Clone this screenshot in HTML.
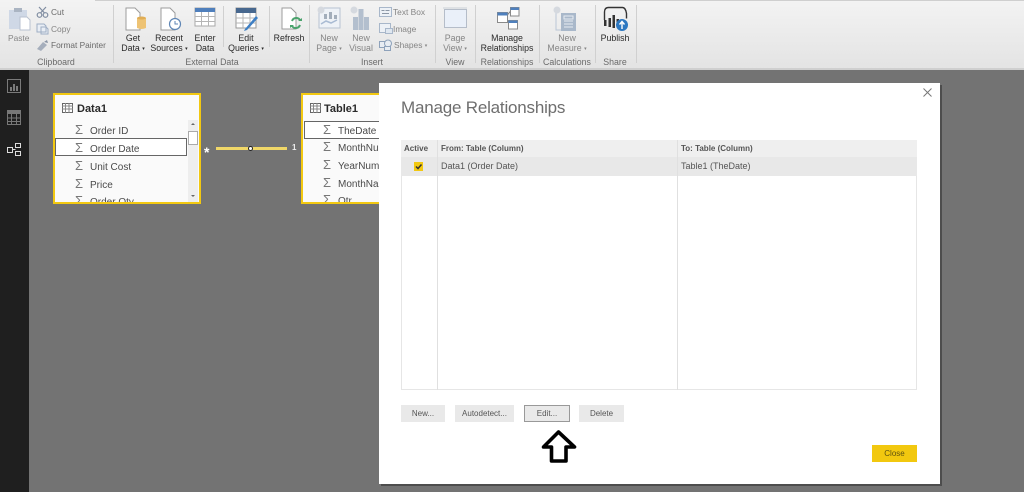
<!DOCTYPE html>
<html><head><meta charset="utf-8"><style>
*{box-sizing:border-box}
html,body{margin:0;padding:0}
body{width:1024px;height:492px;overflow:hidden;position:relative;background:#737373;font-family:"Liberation Sans",sans-serif;color:#2a2a2a}
#w{position:absolute;left:0;top:0;width:1024px;height:492px;filter:blur(.35px)}
.t{position:absolute;white-space:nowrap;font-size:8.8px;line-height:10px}
.c{transform:translateX(-50%);text-align:center}
.g{color:#858585}
.l{color:#6a6a6a}
.a{position:absolute}
svg{position:absolute;left:0;top:0}
.f{font-size:10px;color:#4a4a4a;line-height:12px}
.s{position:absolute;left:1px;top:-2px;font-size:13px;color:#777}
.b{position:absolute;background:#e9e9e9;text-align:center;font-size:8px;line-height:17px;color:#555;height:17px}
.d{font-size:5px;vertical-align:1px}
.h{font-size:8px;font-weight:bold;color:#555}
</style></head><body><div id="w">
<div class="a" style="left:0;top:0;width:1024px;height:69px;background:linear-gradient(#f3f3f3,#e3e3e3)"></div>
<div class="a" style="left:0;top:68px;width:1024px;height:2px;background:#cfcfcf"></div>
<div class="a" style="left:95px;top:0;width:929px;height:1px;background:#cfcfcf"></div>
<div class="a" style="left:0;top:70px;width:29px;height:422px;background:#1f1f1f"></div>

<svg width="1024" height="492" viewBox="0 0 1024 492">
<g stroke="#d0d0d0"><path d="M113.5 5V63M223.5 6V47M269.5 6V47M309.5 5V63M435.5 5V63M475.5 5V63M539.5 5V63M595.5 5V63M636.5 5V63"/></g>
<!-- paste -->
<path d="M9 10h18v19H9z" fill="#cfd8e6"/><path d="M14 8h8v4h-8z" fill="#aab4c2"/>
<path d="M20 17h7l3 3v10h-10z" fill="#fff" stroke="#b9c2d0"/>
<!-- cut -->
<g fill="none" stroke="#7f8ca0" stroke-width="1.200"><circle cx="39.500" cy="15" r="2.300"/><circle cx="45.500" cy="15" r="2.300"/><path d="M40.500 13L46 7M44.500 13L39 7"/></g>
<!-- copy -->
<path d="M37 24h7l2 2v6h-9z M41 27h5l2 2v5h-7z" fill="#e9eef5" stroke="#9eaec4"/>
<!-- format painter -->
<path d="M37 49l6-7 4 3-6 6z" fill="#a5aebc"/><path d="M44 42l3-2 1 3z" fill="#8792a3"/>
<!-- get data -->
<path d="M126 8h9l5 5v17h-14z" fill="#fff" stroke="#9c9c9c"/>
<path d="M137 18h9v10q-4.500 2-9 0z" fill="#eec374"/><ellipse cx="141.500" cy="18" rx="4.500" ry="1.500" fill="#e0ad55"/>
<!-- recent -->
<path d="M161 8h9l5 5v17h-14z" fill="#fff" stroke="#9c9c9c"/>
<circle cx="175" cy="24" r="5.500" fill="#fff" stroke="#5f86b5" stroke-width="1.200"/><path d="M175 21v3h3" fill="none" stroke="#5f86b5"/>
<!-- enter data -->
<rect x="195" y="8" width="20" height="18" fill="#fff" stroke="#a9a9a9"/><rect x="195" y="8" width="20" height="4" fill="#4f7fbc"/>
<path d="M195 16.500h20M195 21.500h20M201.500 12v14M208.500 12v14" stroke="#b5b5b5" fill="none"/>
<!-- edit queries -->
<rect x="236" y="8" width="20" height="20" fill="#fff" stroke="#999"/><rect x="236" y="8" width="20" height="5" fill="#48688f"/>
<path d="M236 18h20M236 23h20M243 13v15M250 13v15" stroke="#b5b5b5" fill="none"/>
<path d="M245 29l11-13 2 2-11 12-3 1z" fill="#3e7fc4"/>
<!-- refresh -->
<path d="M282 8h9l5 5v16h-14z" fill="#fff" stroke="#9c9c9c"/>
<path d="M292 21a4.500 4.500 0 0 1 8-1M300 25a4.500 4.500 0 0 1-8 1" fill="none" stroke="#4ba36d" stroke-width="2"/><path d="M298 21h4v-3zM294 25h-4v3z" fill="#4ba36d"/>
<!-- new page -->
<rect x="319" y="8" width="21" height="20" fill="#eef2f7" stroke="#b8c3d2"/>
<path d="M324 14h3v5h-3zM329 12h3v7h-3zM334 15h3v4h-3z" fill="#a3aebb"/><path d="M321 24l5-3 5 2 6-3" fill="none" stroke="#a9bbd3" stroke-width="1.500"/>
<circle cx="321" cy="10" r="3.500" fill="#d5d9df"/>
<!-- new visual -->
<path d="M353 17h5v13h-5zM358.500 9h5v21h-5zM364 17h5v13h-5z" fill="#b3bfce"/><circle cx="354" cy="10" r="3.500" fill="#d5d9df"/>
<!-- text box -->
<rect x="379.500" y="7.500" width="12" height="9" fill="#edf1f6" stroke="#a8b7ca"/><path d="M381.500 10.500h3M385.500 10.500h4M382 13.500h7" stroke="#8c97a6"/>
<rect x="379.500" y="23.500" width="11" height="9" fill="#edf1f6" stroke="#a8b7ca"/><rect x="385.500" y="28.500" width="7" height="5" fill="#dfe7f0" stroke="#a8b7ca"/>
<rect x="379.500" y="41.500" width="7" height="6" fill="#e8edf3" stroke="#8ea2bb"/><circle cx="388" cy="43.500" r="3.500" fill="#e8edf3" stroke="#8ea2bb"/><rect x="384.500" y="46.500" width="6" height="4" fill="#e8edf3" stroke="#8ea2bb"/>
<!-- page view -->
<rect x="444.500" y="9.500" width="22" height="18" fill="#eaf0f9" stroke="#b5bdc9"/><path d="M443 8h24" stroke="#ccd1d8"/>
<!-- manage relationships -->
<path d="M507 15.500L511 10.500M507 20L509 24" fill="none" stroke="#777"/>
<rect x="497.500" y="12.500" width="10" height="10" fill="#fff" stroke="#8a8a8a"/><rect x="497.500" y="12.500" width="10" height="3" fill="#4f80bd"/>
<rect x="510.500" y="7.500" width="8.500" height="8.500" fill="#fff" stroke="#8a8a8a"/><rect x="510.500" y="7.500" width="8.500" height="2.500" fill="#4f80bd"/>
<rect x="508.500" y="20.500" width="9" height="8.500" fill="#fff" stroke="#8a8a8a"/><rect x="508.500" y="20.500" width="9" height="2.500" fill="#4f80bd"/>
<!-- new measure -->
<path d="M556 13v17h8" fill="none" stroke="#bac6d6"/><rect x="561" y="13" width="15" height="18" fill="#a9b8ca"/><path d="M564 16h9v3h-9zM564 21h9M564 24h9M564 27h9" stroke="#e7ecf2" fill="none"/>
<circle cx="557" cy="10" r="3.500" fill="#d5d9df"/>
<!-- publish -->
<path d="M604.500 20v-8q0-4.500 4-4.500h14q3 0 4 6v5" fill="none" stroke="#333" stroke-width="1.400"/>
<path d="M604 20h2.500v6H604zM608.500 18h2.500v9h-2.500zM612.500 15h2.500v13h-2.500zM616.500 19h2.500v7h-2.500z" fill="#333"/>
<circle cx="622" cy="25" r="6" fill="#2d78c1"/><path d="M622 29v-7M619.500 24.500l2.500-3 2.500 3" stroke="#fff" fill="none" stroke-width="1.400"/>
<!-- sidebar icons -->
<rect x="7.500" y="79.500" width="13" height="13" fill="none" stroke="#7a7a7a"/><path d="M10 91v-4h2v4zM13 91v-7h2v7zM16 91v-5h2v5z" fill="#7a7a7a"/>
<rect x="7.500" y="110.500" width="13" height="14" fill="none" stroke="#777"/><path d="M7 111h14v3H7z" fill="#777"/><path d="M7 118h14M7 121.500h14M11.500 114v11M16.500 114v11" stroke="#777"/>
<rect x="7.500" y="147.500" width="5" height="5" fill="none" stroke="#ddd"/><rect x="15.500" y="143.500" width="5" height="4" fill="none" stroke="#ddd"/><rect x="15.500" y="151.500" width="5" height="4" fill="none" stroke="#ddd"/><path d="M12.500 149.500h3" stroke="#ddd"/>
</svg>

<!-- ribbon text -->
<div class="t g" style="left:8px;top:33px;font-size:8.400px">Paste</div>
<div class="t l" style="left:51px;top:7px;font-size:8.400px">Cut</div>
<div class="t g" style="left:51px;top:24px;font-size:8.400px">Copy</div>
<div class="t l" style="left:51px;top:40px;font-size:8.300px">Format Painter</div>
<div class="t l c" style="left:56px;top:57px">Clipboard</div>
<div class="t c" style="left:133px;top:33px">Get</div>
<div class="t c" style="left:133px;top:43px">Data <span class="d">▾</span></div>
<div class="t c" style="left:169px;top:33px">Recent</div>
<div class="t c" style="left:169px;top:43px">Sources <span class="d">▾</span></div>
<div class="t c" style="left:205px;top:33px">Enter</div>
<div class="t c" style="left:205px;top:43px">Data</div>
<div class="t c" style="left:246px;top:33px">Edit</div>
<div class="t c" style="left:246px;top:43px">Queries <span class="d">▾</span></div>
<div class="t c" style="left:289px;top:33px">Refresh</div>
<div class="t l c" style="left:212px;top:57px">External Data</div>
<div class="t g c" style="left:329px;top:33px">New</div>
<div class="t g c" style="left:329px;top:43px">Page <span class="d">▾</span></div>
<div class="t g c" style="left:361px;top:33px">New</div>
<div class="t g c" style="left:361px;top:43px">Visual</div>
<div class="t g" style="left:393px;top:7px;font-size:8.400px">Text Box</div>
<div class="t g" style="left:393px;top:24px;font-size:8.400px">Image</div>
<div class="t g" style="left:394px;top:40px;font-size:8.400px">Shapes <span class="d">▾</span></div>
<div class="t l c" style="left:372px;top:57px">Insert</div>
<div class="t g c" style="left:455px;top:33px">Page</div>
<div class="t g c" style="left:455px;top:43px">View <span class="d">▾</span></div>
<div class="t l c" style="left:455px;top:57px">View</div>
<div class="t c" style="left:507px;top:33px">Manage</div>
<div class="t c" style="left:507px;top:43px">Relationships</div>
<div class="t l c" style="left:507px;top:57px">Relationships</div>
<div class="t g c" style="left:567px;top:33px">New</div>
<div class="t g c" style="left:567px;top:43px">Measure <span class="d">▾</span></div>
<div class="t l c" style="left:567px;top:57px">Calculations</div>
<div class="t c" style="left:615px;top:33px">Publish</div>
<div class="t l c" style="left:615px;top:57px">Share</div>

<!-- Data1 card -->
<div class="a" style="left:53px;top:93px;width:148px;height:111px;background:#fafafa;border:2px solid #f2c811;overflow:hidden">
 <svg width="12" height="10" style="left:7px;top:8px"><rect x=".5" y=".5" width="10" height="9" fill="#fff" stroke="#666"/><path d="M0 3h11M0 6h11M3.500 0v10M7 0v10" stroke="#888"/></svg>
 <div class="t" style="left:22px;top:8px;font-size:11px;line-height:12px;font-weight:bold">Data1</div>
 <div class="a" style="left:0;top:43px;width:132px;height:18px;border:1px solid #666;background:#fff"></div>
 <div class="t f" style="left:19px;top:31px"><span class="s">Σ</span><span style="margin-left:16px">Order ID</span></div>
 <div class="t f" style="left:19px;top:49px"><span class="s">Σ</span><span style="margin-left:16px">Order Date</span></div>
 <div class="t f" style="left:19px;top:67px"><span class="s">Σ</span><span style="margin-left:16px">Unit Cost</span></div>
 <div class="t f" style="left:19px;top:85px"><span class="s">Σ</span><span style="margin-left:16px">Price</span></div>
 <div class="t f" style="left:19px;top:102px"><span class="s">Σ</span><span style="margin-left:16px">Order Qty</span></div>
 <div class="a" style="left:133px;top:25px;width:10px;height:82px;background:#eee"></div>
 <div class="a" style="left:133px;top:36px;width:10px;height:14px;background:#fff;border:1px solid #aaa"></div>
 <svg width="10" height="82" style="left:133px;top:25px"><path d="M3 5l2-2 2 2zM3 75l2 2 2-2z" fill="#666"/></svg>
</div>

<!-- relationship line -->
<div class="a" style="left:216px;top:147px;width:71px;height:3px;background:#f0d768"></div>
<div class="a" style="left:248px;top:146px;width:5px;height:5px;border-radius:50%;background:#fff;border:1.500px solid #222"></div>
<div class="t" style="left:204px;top:147px;color:#fff;font-weight:bold;font-size:14px">*</div>
<div class="t" style="left:292px;top:143px;color:#eee;font-weight:bold;font-size:8px">1</div>

<!-- Table1 card -->
<div class="a" style="left:301px;top:93px;width:90px;height:111px;background:#fafafa;border:2px solid #f2c811;overflow:hidden">
 <svg width="12" height="10" style="left:7px;top:8px"><rect x=".5" y=".5" width="10" height="9" fill="#fff" stroke="#666"/><path d="M0 3h11M0 6h11M3.500 0v10M7 0v10" stroke="#888"/></svg>
 <div class="t" style="left:21px;top:8px;font-size:11px;line-height:12px;font-weight:bold">Table1</div>
 <div class="a" style="left:1px;top:26px;width:85px;height:18px;border:1px solid #666;background:#fff"></div>
 <div class="t f" style="left:19px;top:31px"><span class="s">Σ</span><span style="margin-left:16px">TheDate</span></div>
 <div class="t f" style="left:19px;top:48px"><span class="s">Σ</span><span style="margin-left:16px">MonthNum</span></div>
 <div class="t f" style="left:19px;top:66px"><span class="s">Σ</span><span style="margin-left:16px">YearNum</span></div>
 <div class="t f" style="left:19px;top:84px"><span class="s">Σ</span><span style="margin-left:16px">MonthName</span></div>
 <div class="t f" style="left:19px;top:101px"><span class="s">Σ</span><span style="margin-left:16px">Qtr</span></div>
</div>

<!-- dialog -->
<div class="a" style="left:379px;top:83px;width:561px;height:401px;background:#fff;box-shadow:2px 2px 0 #4d4d4d;overflow:hidden">
 <svg width="12" height="12" style="left:543px;top:4px"><path d="M1.500 1.500l8 8M9.500 1.500l-8 8" stroke="#777" fill="none"/></svg>
 <div class="t" style="left:22px;top:13px;font-size:17px;line-height:24px;letter-spacing:-.2px;color:#6e6e6e">Manage Relationships</div>
 <div class="a" style="left:22px;top:57px;width:516px;height:250px;border:1px solid #e6e6e6;background:#fff"></div>
 <div class="a" style="left:22px;top:57px;width:516px;height:17px;background:#efefef"></div>
 <div class="a" style="left:22px;top:74px;width:516px;height:19px;background:#e8e8e8"></div>
 <div class="a" style="left:58px;top:57px;width:1px;height:250px;background:#e0e0e0"></div>
 <div class="a" style="left:298px;top:57px;width:1px;height:250px;background:#e0e0e0"></div>
 <div class="t h" style="left:25px;top:61px">Active</div>
 <div class="t h" style="left:62px;top:61px">From: Table (Column)</div>
 <div class="t h" style="left:302px;top:61px">To: Table (Column)</div>
 <div class="a" style="left:35px;top:79px;width:9px;height:9px;background:#f2c811"></div>
 <svg width="9" height="9" style="left:35px;top:79px"><path d="M2 4.500l2 2 3.500-4" fill="none" stroke="#333" stroke-width="1.500"/></svg>
 <div class="t" style="left:62px;top:78px;font-size:9px;color:#555">Data1 (Order Date)</div>
 <div class="t" style="left:302px;top:78px;font-size:9px;color:#555">Table1 (TheDate)</div>
 <div class="b" style="left:22px;top:322px;width:44px">New...</div>
 <div class="b" style="left:76px;top:322px;width:59px">Autodetect...</div>
 <div class="b" style="left:145px;top:322px;width:46px;border:1px solid #999;line-height:15px">Edit...</div>
 <div class="b" style="left:200px;top:322px;width:45px">Delete</div>
 <div class="b" style="left:493px;top:362px;width:45px;background:#f2c80f;color:#5f5310">Close</div>
 <svg width="37" height="34" style="left:162px;top:347px"><path d="M17.500 2L33.500 17H25V31H10.500V17H2.500z" fill="#fff" stroke="#000" stroke-width="3.600" stroke-linejoin="round"/></svg>
</div>
</div></body></html>
